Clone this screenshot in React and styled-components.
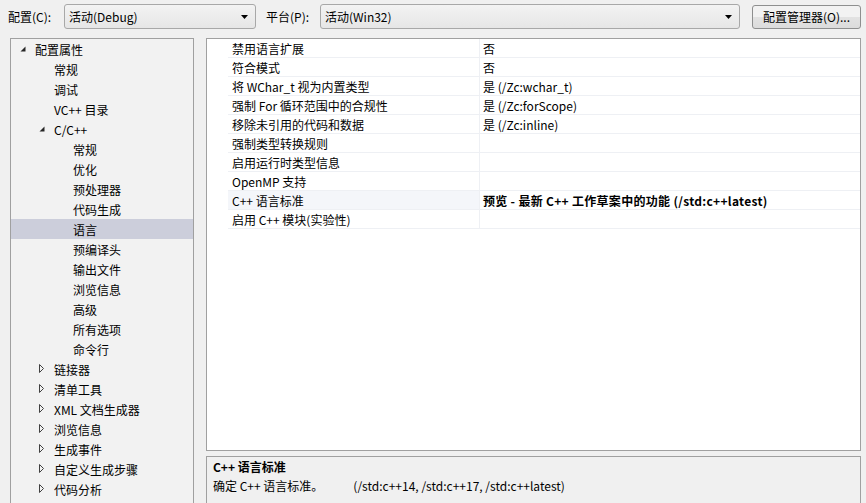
import styled, { createGlobalStyle } from 'styled-components'

const GlobalStyle = createGlobalStyle`
    html, body {
        margin: 0;
        padding: 0;
        background: #f0f0f0;
    }
    body {
        font-family: "Noto Sans CJK SC", "Noto Sans", sans-serif;
        font-size: 12px;
        color: #000;
    }
`

const Page = styled.div`
    height: 100vh;
    overflow: hidden;
    display: flex;
    flex-direction: column;
    padding: 4px 5px 0 8px;
    box-sizing: border-box;
    background: #f0f0f0;
`

const TopBar = styled.div`
    display: flex;
    align-items: center;
    height: 25px;
`

const Label = styled.span`
    width: ${(props) => props.$width}px;
    flex-shrink: 0;
    white-space: nowrap;
`

const Combo = styled.div`
    box-sizing: border-box;
    width: ${(props) => props.$width}px;
    height: 25px;
    margin-right: ${(props) => props.$after}px;
    border: 1px solid #a8a8a8;
    border-radius: 3px;
    background: linear-gradient(#f3f3f3, #e6e6e6);
    display: flex;
    align-items: center;
    justify-content: space-between;
    padding: 0 6px 0 4px;
`

const Button = styled.div`
    box-sizing: border-box;
    width: 109px;
    height: 24px;
    border: 1px solid #8e8f8f;
    border-radius: 3px;
    background: linear-gradient(#f2f2f2 50%, #e2e2e2 50%, #dcdcdc);
    display: flex;
    align-items: center;
    justify-content: center;
`

const Body = styled.div`
    flex: 1;
    display: flex;
    gap: 12px;
    margin-top: 9px;
    margin-left: 2px;
    min-height: 0;
`

const Tree = styled.div`
    width: 184px;
    box-sizing: border-box;
    border: 1px solid #a0a0a0;
    border-bottom: none;
    background: #f2f2f2;
`

const TreeRow = styled.div`
    height: 20px;
    display: flex;
    align-items: center;
    padding-left: ${(props) => 24 + props.$level * 19}px;
    position: relative;
    background: ${(props) => (props.$selected ? '#cccedb' : 'transparent')};
    white-space: nowrap;
`

const Twisty = styled.svg`
    position: absolute;
    left: ${(props) => 8 + props.$level * 19}px;
    top: ${(props) => props.$top}px;
`

const RightCol = styled.div`
    flex: 1;
    display: flex;
    flex-direction: column;
    gap: 5px;
`

const Grid = styled.div`
    height: 413px;
    box-sizing: border-box;
    border: 1px solid #a0a0a0;
    background: #fff;
`

const GridRow = styled.div`
    display: flex;
    height: 19px;
`

const Margin = styled.div`
    width: 21px;
    background: #fff;
`

const NameCell = styled.div`
    width: 252px;
    box-sizing: border-box;
    padding-left: 4px;
    border-bottom: 1px solid #eef0f4;
    border-right: 1px solid #eef0f4;
    display: flex;
    align-items: center;
    background: ${(props) => (props.$active ? '#f4f6fa' : '#fff')};
    white-space: nowrap;
`

const ValueCell = styled.div`
    flex: 1;
    box-sizing: border-box;
    padding-left: 3px;
    border-bottom: 1px solid #eef0f4;
    display: flex;
    align-items: center;
    font-weight: ${(props) => (props.$bold ? 700 : 400)};
    letter-spacing: ${(props) => (props.$bold ? '0.3px' : '0')};
    white-space: nowrap;
`

const Desc = styled.div`
    flex: 1;
    box-sizing: border-box;
    border: 1px solid #a0a0a0;
    border-bottom: none;
    background: #f0f0f0;
    padding: 0 6px;
`

const DescTitle = styled.div`
    font-weight: 700;
    height: 19px;
    line-height: 19px;
`

const DescText = styled.div`
    height: 19px;
    line-height: 19px;
    white-space: nowrap;
`

const DescOptions = styled.span`
    margin-left: 30px;
`

const DropArrow = () => (
    <svg width="8" height="4" viewBox="0 0 8 4">
        <path d="M0 0 H7 L3.5 4 Z" fill="#000" />
    </svg>
)

const tree = [
    { level: 0, text: '配置属性', open: true },
    { level: 1, text: '常规' },
    { level: 1, text: '调试' },
    { level: 1, text: 'VC++ 目录' },
    { level: 1, text: 'C/C++', open: true },
    { level: 2, text: '常规' },
    { level: 2, text: '优化' },
    { level: 2, text: '预处理器' },
    { level: 2, text: '代码生成' },
    { level: 2, text: '语言', selected: true },
    { level: 2, text: '预编译头' },
    { level: 2, text: '输出文件' },
    { level: 2, text: '浏览信息' },
    { level: 2, text: '高级' },
    { level: 2, text: '所有选项' },
    { level: 2, text: '命令行' },
    { level: 1, text: '链接器', open: false },
    { level: 1, text: '清单工具', open: false },
    { level: 1, text: 'XML 文档生成器', open: false },
    { level: 1, text: '浏览信息', open: false },
    { level: 1, text: '生成事件', open: false },
    { level: 1, text: '自定义生成步骤', open: false },
    { level: 1, text: '代码分析', open: false },
]

const props = [
    ['禁用语言扩展', '否'],
    ['符合模式', '否'],
    ['将 WChar_t 视为内置类型', '是 (/Zc:wchar_t)'],
    ['强制 For 循环范围中的合规性', '是 (/Zc:forScope)'],
    ['移除未引用的代码和数据', '是 (/Zc:inline)'],
    ['强制类型转换规则', ''],
    ['启用运行时类型信息', ''],
    ['OpenMP 支持', ''],
    ['C++ 语言标准', '预览 - 最新 C++ 工作草案中的功能 (/std:c++latest)', true],
    ['启用 C++ 模块(实验性)', ''],
]

const TreeItem = ({ item }) => (
    <TreeRow $level={item.level} $selected={item.selected}>
        {item.open === true && (
            <Twisty $level={item.level} $top={6} width="8" height="8" viewBox="0 0 8 8">
                <path d="M6.5 1.5 V6.5 H1.5 Z" fill="#262626" />
            </Twisty>
        )}
        {item.open === false && (
            <Twisty $level={item.level} $top={5} width="8" height="9" viewBox="0 0 8 9">
                <path d="M1.5 0.5 L5.5 4.5 L1.5 8.5 Z" fill="none" stroke="#404040" />
            </Twisty>
        )}
        {item.text}
    </TreeRow>
)

const App = () => {
    return (
        <Page>
            <GlobalStyle />
            <TopBar>
                <Label $width={56}>配置(C):</Label>
                <Combo $width={192} $after={10}>
                    <span>活动(Debug)</span>
                    <DropArrow />
                </Combo>
                <Label $width={54}>平台(P):</Label>
                <Combo $width={420} $after={12}>
                    <span>活动(Win32)</span>
                    <DropArrow />
                </Combo>
                <Button>配置管理器(O)...</Button>
            </TopBar>
            <Body>
                <Tree>
                    {tree.map((item, i) => (
                        <TreeItem key={i} item={item} />
                    ))}
                </Tree>
                <RightCol>
                    <Grid>
                        {props.map(([name, value, active], i) => (
                            <GridRow key={i}>
                                <Margin />
                                <NameCell $active={active}>{name}</NameCell>
                                <ValueCell $bold={active}>{value}</ValueCell>
                            </GridRow>
                        ))}
                    </Grid>
                    <Desc>
                        <DescTitle>C++ 语言标准</DescTitle>
                        <DescText>
                            确定 C++ 语言标准。
                            <DescOptions>(/std:c++14, /std:c++17, /std:c++latest)</DescOptions>
                        </DescText>
                    </Desc>
                </RightCol>
            </Body>
        </Page>
    )
}

export default App
